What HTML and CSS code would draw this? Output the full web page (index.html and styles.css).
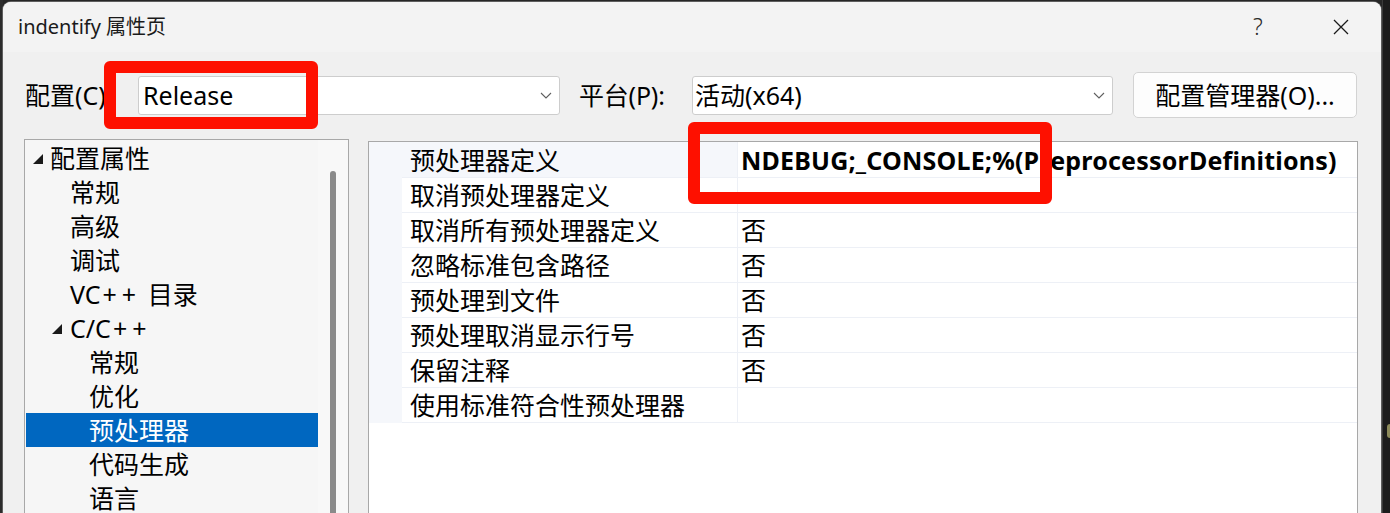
FILE: index.html
```html
<!DOCTYPE html>
<html lang="zh-CN">
<head>
<meta charset="utf-8">
<title>indentify 属性页</title>
<link rel="stylesheet" href="styles.css">
</head>
<body>
<div class="screen">
  <div class="left-edge"></div>
  <div class="dialog">
    <div class="titlebar">
      <span class="title">indentify 属性页</span>
      <span class="help">?</span>
      <span class="close"><svg width="16" height="16" viewBox="0 0 16 16"><path d="M1 1 L15 15 M15 1 L1 15" stroke="#1a1a1a" stroke-width="1.3" fill="none"/></svg></span>
    </div>
    <div class="content">
      <div class="toolbar">
        <span class="lbl lbl-config">配置(C)</span>
        <div class="combo combo-config">
          <span class="combo-text">Release</span>
          <svg class="chev" width="12" height="7" viewBox="0 0 12 7"><path d="M1 1 L6 6 L11 1" stroke="#606060" stroke-width="1.1" fill="none"/></svg>
        </div>
        <span class="lbl lbl-platform">平台(P):</span>
        <div class="combo combo-platform">
          <span class="combo-text">活动(x64)</span>
          <svg class="chev" width="12" height="7" viewBox="0 0 12 7"><path d="M1 1 L6 6 L11 1" stroke="#606060" stroke-width="1.1" fill="none"/></svg>
        </div>
        <div class="btn">配置管理器(O)...</div>
      </div>
      <div class="main">
        <div class="tree">
          <div class="tree-list">
            <div class="node l1"><svg class="tri" width="10" height="10" viewBox="0 0 10 10"><polygon points="10,0 10,10 0,10" fill="#1a1a1a"/></svg><span>配置属性</span></div>
            <div class="node l2">常规</div>
            <div class="node l2">高级</div>
            <div class="node l2">调试</div>
            <div class="node l2"><span>VC<span class="plus">++</span> 目录</span></div>
            <div class="node l2x"><svg class="tri" width="10" height="10" viewBox="0 0 10 10"><polygon points="10,0 10,10 0,10" fill="#1a1a1a"/></svg><span>C/C<span class="plus">++</span></span></div>
            <div class="node l3">常规</div>
            <div class="node l3">优化</div>
            <div class="node l3 selected">预处理器</div>
            <div class="node l3">代码生成</div>
            <div class="node l3">语言</div>
          </div>
          <div class="scroll"><div class="thumb"></div></div>
        </div>
        <div class="grid">
          <div class="row first"><div class="gut"></div><div class="name">预处理器定义</div><div class="val bold">NDEBUG;_CONSOLE;%(PreprocessorDefinitions)</div></div>
          <div class="row"><div class="gut"></div><div class="name">取消预处理器定义</div><div class="val"></div></div>
          <div class="row"><div class="gut"></div><div class="name">取消所有预处理器定义</div><div class="val">否</div></div>
          <div class="row"><div class="gut"></div><div class="name">忽略标准包含路径</div><div class="val">否</div></div>
          <div class="row"><div class="gut"></div><div class="name">预处理到文件</div><div class="val">否</div></div>
          <div class="row"><div class="gut"></div><div class="name">预处理取消显示行号</div><div class="val">否</div></div>
          <div class="row"><div class="gut"></div><div class="name">保留注释</div><div class="val">否</div></div>
          <div class="row"><div class="gut"></div><div class="name">使用标准符合性预处理器</div><div class="val"></div></div>
        </div>
      </div>
    </div>
  </div>
  <div class="right-edge"><span class="blip"></span></div>
  <div class="mark mark-config"></div>
  <div class="mark mark-def"></div>
</div>
</body>
</html>
```

FILE: styles.css
```css
* { box-sizing: border-box; }
html, body { margin: 0; padding: 0; }
body {
  background: #262626;
  font-family: "Noto Sans", "Noto Sans CJK SC", sans-serif;
  color: #000;
  width: 1390px;
  height: 513px;
  overflow: hidden;
}
.screen {
  position: relative;
  display: flex;
  width: 1390px;
  height: 513px;
  overflow: hidden;
}
.left-edge {
  width: 3px;
  flex: none;
  background: #2c2c2c;
}
.dialog {
  width: 1378px;
  flex: none;
  margin-top: 2px;
  height: 540px;
  background: #f0f0f0;
  border-radius: 8px 8px 0 0;
  box-shadow: 0 0 0 1px #5e5e5e;
  overflow: hidden;
}
.right-edge {
  flex: 1;
  background: #1c1c1c;
  margin-left: 1px;
  border-left: 1px solid #3a3a3a;
  padding-top: 424px;
  padding-left: 4px;
}
.blip {
  display: block;
  width: 6px;
  height: 14px;
  border-radius: 3px 0 0 3px;
  background: #8c8a5a;
}
.titlebar {
  height: 50px;
  background: #f3f3f3;
  display: flex;
  align-items: center;
  padding-left: 15px;
}
.title {
  font-size: 20px;
  line-height: 26px;
  color: #1a1a1a;
}
.help {
  margin-left: auto;
  width: 40px;
  margin-right: 40px;
  text-align: center;
  font-size: 23px;
  line-height: 28px;
  color: #2a2a2a;
  font-family: "Noto Sans", sans-serif;
  font-weight: 300;
  margin-top: -2px;
}
.close {
  width: 46px;
  margin-right: 17px;
  display: flex;
  justify-content: center;
}
.content {
  padding: 20px 23px 0 21px;
}
.toolbar {
  display: flex;
  align-items: center;
  height: 46px;
  font-size: 25px;
}
.lbl {
  line-height: 30px;
  white-space: nowrap;
}
.lbl-config { width: 114px; padding-left: 1px; }
.lbl-platform { width: 113px; margin-left: 19px; padding-left: 0; letter-spacing: -0.2px; }
.combo {
  height: 39px;
  background: #fff;
  border: 1px solid #cdcdcd;
  border-radius: 3px;
  display: flex;
  align-items: center;
  padding-left: 4px;
  padding-right: 7px;
}
.combo-config { width: 422px; }
.combo-platform { width: 421px; padding-left: 2px; }
.combo-text { line-height: 30px; }
.chev { margin-left: auto; }
.btn {
  margin-left: 20px;
  width: 224px;
  height: 46px;
  background: #fdfdfd;
  border: 1px solid #d3d3d3;
  border-radius: 5px;
  display: flex;
  align-items: center;
  justify-content: center;
  line-height: 30px;
}
.main {
  display: flex;
  align-items: flex-start;
  gap: 19px;
  margin-top: 21px;
  font-size: 25px;
}
.tree {
  width: 325px;
  height: 390px;
  border: 1px solid #a8a8a8;
  border-bottom: none;
  display: flex;
  background: #f6f6f6;
}
.tree-list {
  width: 293px;
  padding-top: 1px;
  padding-left: 1px;
}
.node {
  height: 34px;
  display: flex;
  align-items: center;
  line-height: 34px;
  white-space: nowrap;
}
.node .tri { flex: none; margin-top: 1px; }
.plus { letter-spacing: 5px; margin-left: 2px; }
.l1 { padding-left: 7px; }
.l1 .tri { margin-right: 7px; }
.l2 { padding-left: 44px; }
.l2x { padding-left: 26px; }
.l2x .tri { margin-right: 8px; }
.l3 { padding-left: 63px; }
.selected { background: #0067c0; color: #fff; }
.scroll {
  width: 30px;
  background: #f8f8f8;
  padding-top: 31px;
  padding-left: 12px;
}
.thumb {
  width: 6px;
  height: 400px;
  background: #8a8a8a;
  border-radius: 3px;
}
.grid {
  width: 990px;
  height: 390px;
  margin-top: 2px;
  border: 1px solid #a8a8a8;
  border-bottom: none;
  background: #fff;
}
.row {
  display: grid;
  grid-template-columns: 33px 335px 1fr;
  height: 35px;
}
.row.first { height: 36px; }
.gut { background: #f5f7fb; }
.name, .val {
  border-bottom: 1px solid #edf0f6;
  display: flex;
  align-items: center;
  line-height: 30px;
  white-space: nowrap;
}
.name { padding-left: 8px; }
.row.first .name { background: #f5f7fb; }
.val { border-left: 1px solid #edf0f6; padding-left: 3px; }
.bold {
  font-weight: 700;
  font-size: 25px;
  letter-spacing: 0.2px;
}
.mark {
  position: absolute;
  border: 12px solid #fe1000;
  border-radius: 6px;
}
.mark-config { left: 104px; top: 61px; width: 214px; height: 68px; }
.mark-def { left: 688px; top: 122px; width: 364px; height: 82px; }
```
